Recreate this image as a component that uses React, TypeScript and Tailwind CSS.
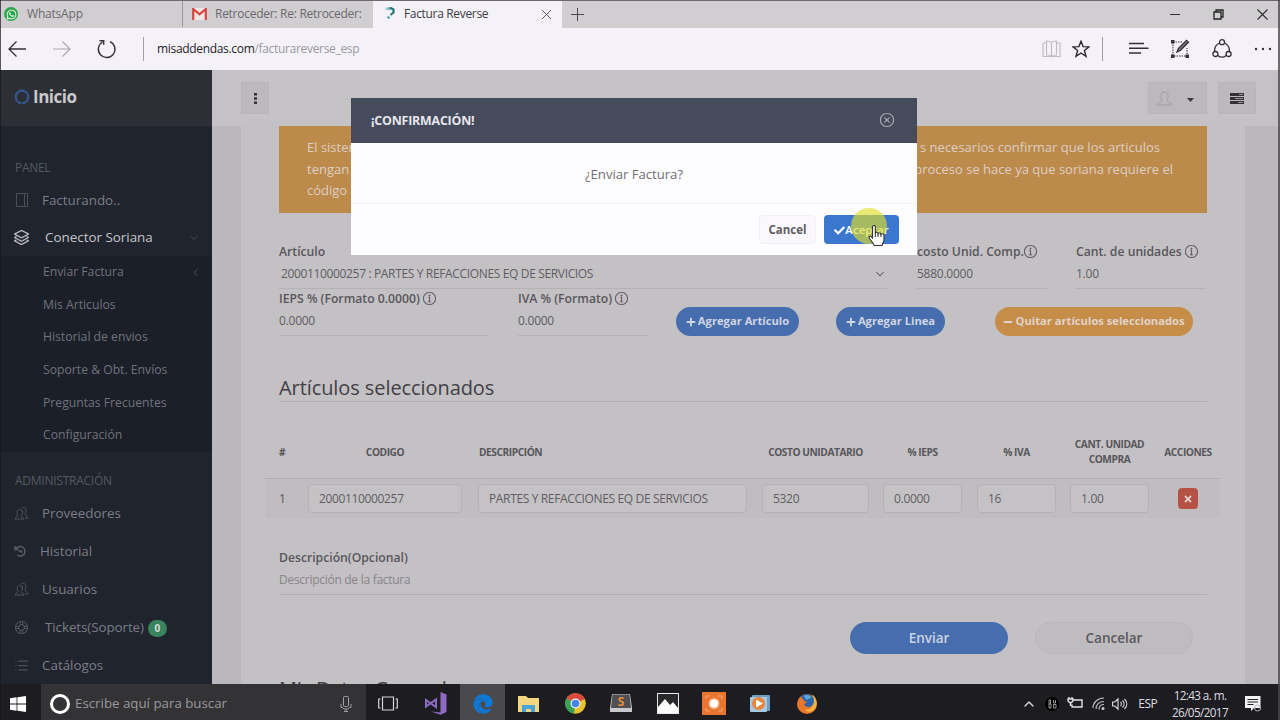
import React from "react";
import { FaCheck, FaEdge, FaMinus, FaPlus, FaTimes, FaWhatsapp } from "react-icons/fa";
import { SlClose, SlInfo, SlLayers, SlSupport } from "react-icons/sl";
import { ChevronDown, ChevronLeft, ChevronUp, List } from "lucide-react";

const BrowserTabs = () => (
  <div className="flex h-7 shrink-0 items-stretch border-t border-[#6f686d] bg-[#d1ced1] pb-px text-[12px] text-[#6b686c]">
    <div className="flex w-[183px] items-center border-r border-[#9d9a9d] pl-1">
      <span className="flex h-[14px] w-[14px] items-center justify-center rounded-full bg-[#2ea64b] text-[11px] text-white">
        <FaWhatsapp />
      </span>
      <span className="ml-[9px] tracking-[-0.2px]">WhatsApp</span>
    </div>
    <div className="flex w-[190px] items-center pl-[9px]">
      <svg width="15" height="12" viewBox="0 0 15 12">
        <rect width="15" height="12" fill="#efe6e6" />
        <path d="M1.2 12V1l6.3 5.4L13.8 1v11" fill="none" stroke="#d8453d" strokeWidth="2.2" />
      </svg>
      <span className="ml-[8px] whitespace-nowrap tracking-[-0.27px]">Retroceder: Re: Retroceder:</span>
    </div>
    <div className="-mb-px flex w-[189px] items-center bg-[#f4f2f8] pb-px pl-[11px] text-[#3d3b40]">
      <svg width="12" height="14" viewBox="0 0 12 14">
        <path d="M3 2l4-.8 2.500 1.300v3L6.500 8" fill="none" stroke="#27767c" strokeWidth="2.200" />
        <path d="M1.500 1.500l4 1" stroke="#8fcccc" strokeWidth="2" />
        <path d="M3.500 9.500l2 2" stroke="#4aa7a8" strokeWidth="2" />
      </svg>
      <span className="ml-[8px] tracking-[-0.33px]">Factura Reverse</span>
      <svg className="ml-auto mr-[10px]" width="11" height="11" viewBox="0 0 11 11" stroke="#5c595e" fill="none">
        <path d="M1 1l9 9M10 1l-9 9" />
      </svg>
    </div>
    <div className="flex flex-1 items-center pl-[9px]">
      <svg width="13" height="13" viewBox="0 0 13 13" stroke="#4a474b" fill="none">
        <path d="M6.500 0v13M0 6.500h13" />
      </svg>
      <div className="ml-auto mr-[12px] flex items-center gap-[33px]">
        <svg width="10" height="10" viewBox="0 0 10 10" stroke="#333">
          <path d="M0 5.500h10" />
        </svg>
        <svg width="11" height="11" viewBox="0 0 11 11" stroke="#222" strokeWidth="1.300" fill="none">
          <path d="M1 3h7v7H1zM3 3V1h7v7H8" />
        </svg>
        <svg width="11" height="11" viewBox="0 0 11 11" stroke="#333" strokeWidth="1.200">
          <path d="M.5.5l10 10M10.500.5l-10 10" />
        </svg>
      </div>
    </div>
  </div>
);

const AddressBar = () => (
  <div className="flex h-[42px] shrink-0 items-center bg-[#f4f2f8] pl-2 text-[12px]">
    <svg width="18" height="16" viewBox="0 0 18 16" fill="none" stroke="#333136" strokeWidth="1.300">
      <path d="M18 8H1M8.500.5L1 8l7.500 7.500" />
    </svg>
    <svg className="ml-[27px]" width="18" height="16" viewBox="0 0 18 16" fill="none" stroke="#a9a6ac" strokeWidth="1.200">
      <path d="M0 8h17M9.500.5L17 8l-7.500 7.500" />
    </svg>
    <svg className="ml-[26px]" width="20" height="20" viewBox="0 0 20 20" fill="none" stroke="#333136" strokeWidth="1.400">
      <path d="M13 2.600A8.300 8.300 0 1 1 5.500 3M2.500 1.800h4.200v4" />
    </svg>
    <div className="ml-[26px] h-6 w-px bg-[#a19ea4]" />
    <span className="ml-[13px] whitespace-nowrap tracking-[-0.32px] text-[#242227]">
      misaddendas.com<span className="text-[#9b989e]">/facturareverse_esp</span>
    </span>
    <div className="ml-auto flex items-center pr-[8px]">
      <svg width="19" height="18" viewBox="0 0 19 18" fill="none" stroke="#bfbcc3" strokeWidth="1.200">
        <path d="M9.500 2.500C8 1 6 1 4.500 1v14c2 0 3.500 0 5 1.500M9.500 2.500C11 1 13 1 14.500 1v14c-2 0-3.500 0-5 1.500V2.500M4.500 3H1v13.500h17V3h-3.500" />
      </svg>
      <svg className="ml-[11px]" width="18" height="18" viewBox="0 0 18 18" fill="none" stroke="#2b292e" strokeWidth="1.400">
        <path d="M9 1.200l2.100 5.400 5.900.2-4.600 3.600 1.600 5.900L9 13l-5 3.300 1.600-5.900L1 6.800l5.900-.2z" />
      </svg>
      <div className="ml-[12px] h-6 w-px bg-[#a19ea4]" />
      <svg className="ml-[26px]" width="20" height="14" viewBox="0 0 20 14" stroke="#333136" strokeWidth="1.400">
        <path d="M0 1.500h15M0 6.200h19.500M0 11h12" />
      </svg>
      <svg className="ml-[21px]" width="20" height="20" viewBox="0 0 20 20" fill="none" stroke="#333136">
        <path d="M3 3h9M3 3v14h14V9" strokeDasharray="1.500 1" />
        <path d="M1 1h3.500v3.500H1zM1 15.500h3.500V19H1zM15.500 15.500H19V19h-3.500z" fill="#333136" stroke="none" />
        <path d="M7 13l1.300-3.500 8.200-8.200 2 2-8.200 8.200z" fill="#77747a" strokeWidth="1.300" />
      </svg>
      <svg className="ml-[22px]" width="20" height="20" viewBox="0 0 20 20" fill="none" stroke="#333136" strokeWidth="1.300">
        <circle cx="10" cy="3.200" r="2.500" />
        <circle cx="3.400" cy="15" r="2.500" />
        <circle cx="16.600" cy="15" r="2.500" />
        <path d="M7.500 4C4.300 5.500 2.300 9 2.700 12.400M12.500 4c3.200 1.500 5.200 5 4.800 8.400M5.800 16.500c2.500 2 5.900 2 8.400 0" />
      </svg>
      <svg className="ml-[22px]" width="18" height="4" viewBox="0 0 18 4" fill="#333136">
        <circle cx="2" cy="2" r="1.200" />
        <circle cx="9" cy="2" r="1.200" />
        <circle cx="16" cy="2" r="1.200" />
      </svg>
    </div>
  </div>
);

const UsersIcon = () => (
  <svg width="15" height="15" viewBox="0 0 15 15" fill="none" stroke="#50545d">
    <path d="M1 13h9c0-2-3-2-3-3.500C8.500 8 9 6 8.500 4.500M1 13c0-2 3-2 3-3.500C2.500 8 2.500 3.500 5.500 3.500 7 3.500 8 4.500 8 6M7 2.500C8 .8 11.500.8 12 4c.2 2-1 3-1 4.500 0 1 3 1.500 3 3.500h-3" />
  </svg>
);

const subItems = [
  "Enviar Factura",
  "Mis Articulos",
  "Historial de envios",
  "Soporte & Obt. Envíos",
  "Preguntas Frecuentes",
  "Configuración",
];

const Sidebar = () => (
  <aside className="flex w-[212px] shrink-0 flex-col overflow-hidden bg-[#20242d] text-[13.4px] text-[#7b7e86]">
    <div className="flex h-14 shrink-0 items-center bg-[#2c2f36] pb-[2px] pl-[14px]">
      <svg width="16" height="16" viewBox="0 0 16 16" fill="none" stroke="#34558e" strokeWidth="2.300">
        <circle cx="8" cy="8" r="6.300" strokeDasharray="18.800 1" transform="rotate(-87 8 8)" />
      </svg>
      <span className="ml-[3px] text-[17px] font-bold tracking-[-0.5px] text-[#c9c8cb]">Inicio</span>
    </div>
    <div className="mt-[28px] flex h-7 shrink-0 items-center pl-[15px] text-[12px] tracking-[-0.3px] text-[#555962]">PANEL</div>
    <div className="mt-[3px] flex h-[30px] shrink-0 items-center pl-[16px]">
      <svg width="12" height="14" viewBox="0 0 12 14" fill="none" stroke="#4c5059">
        <path d="M.5.5h11v13H.5zM8.500.5v13" />
      </svg>
      <span className="ml-[14px]">Facturando..</span>
    </div>
    <div className="flex h-[41px] shrink-0 items-center pl-[14px] pt-[4px] text-[#c6c6ca]">
      <SlLayers size={15} strokeWidth={20} stroke="#c6c6ca" />
      <span className="ml-[16px]">Conector Soriana</span>
      <ChevronDown className="ml-auto mr-[12px] text-[#4a4e57]" size={12} />
    </div>
    <div className="flex h-[196px] shrink-0 flex-col bg-[#1b1f28] text-[12.2px] text-[#70737b]">
      {subItems.map((label, i) => (
        <div key={label} className="flex h-[32.6px] items-center pl-[43px]">
          <span>{label}</span>
          {i === 0 && <ChevronLeft className="ml-auto mr-[11px] text-[#5a5e67]" size={11} />}
        </div>
      ))}
    </div>
    <div className="mt-[13px] flex h-7 shrink-0 items-center pt-1 pl-[15px] text-[12px] tracking-[-0.25px] text-[#555962]">ADMINISTRACIÓN</div>
    <div className="mt-[1px] flex h-[38px] shrink-0 items-center pl-[14px]">
      <UsersIcon />
      <span className="ml-[13px]">Proveedores</span>
    </div>
    <div className="flex h-[38px] shrink-0 items-center pl-[14px]">
      <svg width="12" height="12" viewBox="0 0 12 12" fill="none" stroke="#5a5e67" strokeWidth="1.500">
        <path d="M1 1v3.500h3.500M1.500 4.300C3 1.500 6.500.8 9 2.500s2.500 5.500.5 7.300c-2 1.700-4.500 1.500-6.300.2M4.500 6h3v2" />
      </svg>
      <span className="ml-[14px]">Historial</span>
    </div>
    <div className="flex h-[38px] shrink-0 items-center pl-[14px]">
      <UsersIcon />
      <span className="ml-[13px]">Usuarios</span>
    </div>
    <div className="flex h-[38px] shrink-0 items-center pl-[15px]">
      <SlSupport size={13} color="#5a5e67" />
      <span className="ml-[17px] tracking-[-0.08px]">Tickets(Soporte)</span>
      <span className="ml-[4px] mt-[2px] flex h-[17px] w-[19px] items-center justify-center rounded-full bg-[#37845f] text-[10px] font-bold text-[#d5dcd8]">
        0
      </span>
    </div>
    <div className="flex h-[38px] shrink-0 items-center pl-[14px]">
      <List size={15} color="#4c5059" />
      <span className="ml-[13px]">Catálogos</span>
    </div>
  </aside>
);

type FieldProps = {
  label: string;
  value: string;
  className: string;
  info?: boolean;
  tight?: boolean;
  children?: React.ReactNode;
};

const Field = ({ label, value, className, info, tight, children }: FieldProps) => (
  <div className={`flex shrink-0 flex-col ${className}`}>
    <div className="flex h-[22px] items-center whitespace-nowrap text-[12.2px] font-semibold text-[#58565b]">
      {label}
      {info && (
        <SlInfo className={`mb-[2px] ${tight ? "ml-0" : "ml-[3px]"}`} size={13} stroke="#58565b" strokeWidth={15} />
      )}
    </div>
    <div className="flex h-[26px] items-start border-b border-[#b5b2b6] text-[12px] leading-[22px] tracking-[-0.25px] text-[#605d62]">
      {value}
      {children}
    </div>
  </div>
);

const cellInput =
  "flex h-[29px] items-center rounded-sm border border-[#b5b2b6] bg-[#c5c2c6] pl-[10px] text-[12px] text-[#605d62]";

const ArticlesTable = () => (
  <div className="-mx-[14px] mt-[24px] w-[955px] text-[#58565b]">
    <div className="grid h-[53px] grid-cols-[43px_170px_284px_121px_94px_93px_93px_57px] items-center border-b border-[#b2afb3] text-center text-[10.2px] font-bold leading-[15px] tracking-[-0.45px]">
      <span className="pl-[14px] text-left">#</span>
      <span className="pr-[16px]">CODIGO</span>
      <span className="pl-px text-left">DESCRIPCIÓN</span>
      <span className="pr-[14px]">COSTO UNIDATARIO</span>
      <span className="pr-[15px]">% IEPS</span>
      <span className="pr-[14px]">% IVA</span>
      <span className="pr-[14px]">
        CANT. UNIDAD
        <br />
        COMPRA
      </span>
      <span className="-ml-[7px]">ACCIONES</span>
    </div>
    <div className="grid h-[39px] grid-cols-[43px_170px_284px_121px_94px_93px_93px_57px] items-center bg-[#c0bdc1]">
      <span className="pl-[14px] text-[12px]">1</span>
      <div className={`${cellInput} w-[154px] tracking-[-0.35px]`}>2000110000257</div>
      <div className={`${cellInput} w-[269px] tracking-[-0.36px]`}>PARTES Y REFACCIONES EQ DE SERVICIOS</div>
      <div className={`${cellInput} w-[107px] tracking-[-0.3px]`}>5320</div>
      <div className={`${cellInput} w-[79px] tracking-[-0.3px]`}>0.0000</div>
      <div className={`${cellInput} w-[79px] tracking-[-0.3px]`}>16</div>
      <div className={`${cellInput} w-[79px] tracking-[-0.3px]`}>1.00</div>
      <button className="ml-[15px] flex h-[21px] w-5 items-center justify-center rounded-sm bg-[#b65145] text-[10px] text-[#ddd4d6]">
        <FaTimes />
      </button>
    </div>
  </div>
);

const pill = "flex h-[29px] items-center justify-center gap-[2px] whitespace-nowrap rounded-full text-[11.2px] font-bold";

const Content = () => (
  <main className="flex min-w-0 flex-1 flex-col overflow-hidden bg-[#bab8bb]">
    <div className="flex h-14 shrink-0 items-center bg-[#c4c2c5] pl-[29px] pr-[24px]">
      <button className="flex h-8 w-7 items-center justify-center border border-[#b9b6ba] bg-[#bcb9bd]">
        <svg width="3" height="11" viewBox="0 0 3 11" fill="#333">
          <path d="M0 0h3v2.500H0zM0 4.200h3v2.500H0zM0 8.500h3V11H0z" />
        </svg>
      </button>
      <button className="ml-auto flex h-8 w-[59px] items-center border border-[#b9b6ba] bg-[#bcb9bd] pl-[7px]">
        <svg width="17" height="15" viewBox="0 0 17 15" fill="none" stroke="#aaa7ab" strokeWidth="1.300">
          <path d="M1 14h15c0-3-5-2.500-5-5C13 6 12.500 1 8.500 1S4 6 6 9c0 2.500-5 2-5 5z" />
        </svg>
        <svg className="ml-[14px] mt-1" width="7" height="4" viewBox="0 0 7 4" fill="#3a383c">
          <path d="M0 0h7L3.500 4z" />
        </svg>
      </button>
      <button className="ml-[11px] flex h-8 w-[38px] items-center justify-center border border-[#b9b6ba] bg-[#bcb9bd]">
        <svg width="14" height="11" viewBox="0 0 14 11">
          <path d="M0 0h14v3H0zM0 4h14v3H0zM0 8h14v3H0z" fill="#333136" />
          <path d="M9 1h4v1H9zM5 5h8v1H5zM8 9h5v1H8z" fill="#96939a" />
        </svg>
      </button>
    </div>
    <div className="ml-[29px] flex w-[1004px] flex-1 flex-col bg-[#c4c1c5] px-[38px]">
      <div className="h-[87px] w-[928px] shrink-0 bg-[#bc8a4a] px-7 pt-[11px] text-[13px] leading-[21.5px] text-[#dccfc5]">
        <div className="flex justify-between">
          <span>El sistema</span>
          <span className="pr-[19px]">s necesarios confirmar que los articulos</span>
        </div>
        <div className="flex justify-between">
          <span>tengan</span>
          <span className="pr-[6px]">proceso se hace ya que soriana requiere el</span>
        </div>
        <div>código</div>
      </div>
      <div className="mt-[28px] flex">
        <Field label="Artículo" value="" className="w-[608px]">
          <span className="pl-[2px] tracking-[-0.35px]">2000110000257 : PARTES Y REFACCIONES EQ DE SERVICIOS</span>
          <ChevronDown className="ml-auto mt-[4px]" size={14} strokeWidth={1.8} />
        </Field>
        <Field label="costo Unid. Comp." value="5880.0000" className="ml-[30px] w-[130px]" info tight />
        <Field label="Cant. de unidades" value="1.00" className="ml-[29px] w-[130px]" info />
      </div>
      <div className="-mt-px flex">
        <Field label="IEPS % (Formato 0.0000)" value="0.0000" className="w-[210px]" info />
        <Field label="IVA % (Formato)" value="0.0000" className="ml-[29px] w-[131px]" info />
        <div className="mt-[19px] ml-[27px] flex">
          <button className={`${pill} w-[123px] bg-[#466eae] text-[#d0d5e2]`}>
            <FaPlus size={10} /> Agregar Artículo
          </button>
          <button className={`${pill} ml-[37px] w-[109px] bg-[#466eae] text-[#d0d5e2]`}>
            <FaPlus size={10} /> Agregar Linea
          </button>
          <button className={`${pill} ml-[50px] w-[198px] bg-[#c58d48] text-[#e0d3ca]`}>
            <FaMinus size={10} /> Quitar artículos seleccionados
          </button>
        </div>
      </div>
      <h2 className="mt-[37px] flex h-[29px] w-[928px] items-center border-b border-[#b1aeb2] pt-px text-[20px] tracking-[-0.08px] text-[#424045]">
        Artículos seleccionados
      </h2>
      <ArticlesTable />
      <div className="mt-[29px] flex">
        <div className="flex w-[928px] flex-col">
          <div className="flex h-[22px] items-center text-[12.2px] font-semibold text-[#58565b]">Descripción(Opcional)</div>
          <div className="h-[26px] border-b border-[#b2afb3] text-[12px] leading-[22px] tracking-[-0.28px] text-[#87848a]">
            Descripción de la factura
          </div>
        </div>
      </div>
      <div className="mt-[27px] flex shrink-0 justify-end pr-[14px] text-[13.5px] font-semibold">
        <button className="h-8 w-[158px] rounded-full bg-[#466eae] text-[#cdd4e2]">Enviar</button>
        <button className="ml-[27px] h-8 w-[158px] rounded-full border border-[#bab7bb] bg-[#bfbcc0] text-[#5a585d]">Cancelar</button>
      </div>
      <h2 className="mt-[21px] shrink-0 text-[20px] leading-[28px] tracking-[-0.2px] text-[#424045]">Mis Datos Generales</h2>
    </div>
  </main>
);

const ConfirmModal = () => (
  <div className="absolute left-[351px] top-[98px] z-10 flex h-[157px] w-[566px] flex-col bg-[#fdfcfe]">
    <div className="flex h-[45px] items-center bg-[#454b5b] pl-[20px] pr-[23px]">
      <h3 className="pt-px text-[12.4px] font-bold tracking-[-0.2px] text-[#e6e6ee]">¡CONFIRMACIÓN!</h3>
      <SlClose className="mb-[2px] ml-auto text-[#b5b8c3]" size={14} stroke="#b5b8c3" strokeWidth={15} />
    </div>
    <p className="flex h-[61px] items-center justify-center border-b border-[#f5f3f7] pt-[3px] text-[13.1px] text-[#706e73]">
      ¿Enviar Factura?
    </p>
    <div className="flex justify-end pt-[11px] pr-[18px] text-[12px] font-semibold">
      <button className="h-[29px] w-[57px] rounded-sm border border-[#f3eff7] bg-[#faf8fd] pt-px text-[11.5px] font-bold text-[#5f5d63]">
        Cancel
      </button>
      <button className="ml-[8px] flex h-[29px] w-[75px] items-center justify-center rounded-sm bg-[#3b77cf] pt-px text-[11.5px] text-white">
        <FaCheck size={11} />
        Aceptar
      </button>
    </div>
  </div>
);

const Pointer = () => (
  <div className="absolute left-[851px] top-[208px] z-20 h-10 w-9">
    <div className="h-9 w-9 rounded-full bg-[#dede2a]/65" />
    <svg className="absolute left-[17px] top-[17px]" width="18" height="22" viewBox="0 0 16 22" preserveAspectRatio="none">
      <path
        d="M4 1.500C4 .3 6.500.3 6.500 1.500V8c.5-1 2.500-.8 2.500.5.600-.9 2.500-.6 2.500.6.700-.8 2.700-.4 2.700 1V15c0 2-1.200 3-1.700 5.500H5.500C5 18 1.500 14.500 1 12.500.8 11 2.500 10.800 4 13z"
        fill="#fff"
        stroke="#333"
      />
      <path d="M6.500 8v4M9 8.500V12M11.500 9v3" stroke="#333" strokeWidth=".9" />
    </svg>
  </div>
);

const Taskbar = () => (
  <footer className="flex h-9 shrink-0 items-stretch bg-[#1d1d21]">
    <div className="flex w-[41px] items-center pl-[10px] pt-[3px]">
      <svg width="16" height="16" viewBox="0 0 16 16" fill="#fff">
        <path d="M0 2.200l6.600-.9v6.200H0zM7.400 1.200L16 0v7.500H7.400zM0 8.400h6.600v6.300L0 13.800zM7.400 8.400H16V16l-8.600-1.200z" />
      </svg>
    </div>
    <div className="flex w-[325px] items-center bg-[#333235] pl-[9px] pt-[3px] text-[13.300px] text-[#9b999d]">
      <span className="h-5 w-5 rounded-full border-[3px] border-white" />
      <span className="ml-[5px]">Escribe aquí para buscar</span>
      <svg className="ml-auto mr-[14px]" width="12" height="16" viewBox="0 0 12 16" fill="none" stroke="#a09ea2">
        <rect x="3.500" y=".5" width="5" height="10" rx="1" />
        <path d="M1 8v3.500h1.500L4 13h4l1.500-1.500H11V8M6 13v2.500M4 15.500h4" />
      </svg>
    </div>
    <div className="flex flex-1 items-center">
      <svg className="mt-[3px] ml-[12px]" width="20" height="15" viewBox="0 0 20 15" fill="none" stroke="#d5d4d7" strokeWidth="1.200">
        <path d="M4.500 1h11v13h-11zM2.500 3H.7v9h1.800M17.500 3h1.800v9h-1.800" />
      </svg>
      <svg className="mt-[3px] ml-[26px]" width="23" height="23" viewBox="0 0 23 23">
        <path d="M16.500 0L22.500 2.500v17.500l-6 2.800L7 19.500l9.500 1V0z" fill="#8d6bc4" />
        <path d="M2 8l10 7V7.500L2 14.500z" fill="none" stroke="#8d6bc4" strokeWidth="2" />
      </svg>
      <div className="ml-[13px] flex h-full w-[45px] items-center justify-center bg-[#4a494c] pt-[3px]">
        <FaEdge size={20} color="#0f77d4" />
      </div>
      <div className="flex items-center pt-[3px]">
        <svg className="ml-[13px]" width="21" height="18" viewBox="0 0 21 18">
          <path d="M0 1h8l2 2h11v14H0z" fill="#f4d67e" />
          <path d="M4 17v-7h13v7h-4v-3H8v3z" fill="#4aa3d8" />
        </svg>
        <svg className="ml-[26px]" width="21" height="21" viewBox="0 0 21 21">
          <circle cx="10.500" cy="10.500" r="10.300" fill="#e9c22f" />
          <path d="M10.500 10.500L1.600 5.300A10.300 10.300 0 0 1 19.800 6z" fill="#dc4a3e" />
          <path d="M10.500 10.500L1.600 5.300a10.300 10.300 0 0 0 7.400 15.300z" fill="#36a257" />
          <circle cx="10.500" cy="10.500" r="5" fill="#f3f3f3" />
          <circle cx="10.500" cy="10.500" r="3.800" fill="#4384e6" />
        </svg>
        <svg className="ml-[24px]" width="22" height="21" viewBox="0 0 22 21">
          <path d="M2 1h18l2 14v4H0v-4z" fill="#c9c8ca" />
          <path d="M2.500 1.500h17L21 15H1z" fill="#504f52" />
          <text x="11" y="12.500" textAnchor="middle" fontSize="12" fontWeight="700" fill="#e88b3a">
            S
          </text>
        </svg>
        <svg className="ml-[25px]" width="22" height="21" viewBox="0 0 22 21">
          <rect x=".5" y=".5" width="21" height="20" fill="#29282b" stroke="#e8e7e9" />
          <path d="M1 20v-6l7-8 5 6 3-3 5 6v5z" fill="#fff" />
        </svg>
        <svg className="ml-[23px]" width="24" height="23" viewBox="0 0 24 23">
          <rect width="24" height="23" fill="#e8752f" />
          <path d="M4 7V4h4M16 4h4v3M4 16v3h4M16 19h4v-3" fill="none" stroke="#f2a877" />
          <circle cx="12" cy="11.500" r="5.500" fill="#f5b58b" />
          <circle cx="12" cy="11.500" r="4" fill="#fff" />
        </svg>
        <svg className="ml-[24px]" width="20" height="19" viewBox="0 0 20 19">
          <rect x="2" y="1" width="18" height="16" rx="1" fill="#6d9dc2" />
          <rect x="0" y="3" width="17" height="15" rx="1" fill="#a6c9e0" />
          <circle cx="8.500" cy="9.500" r="6.500" fill="#e8833a" />
          <path d="M6 5.500l7 4-7 4z" fill="#fff" />
        </svg>
        <svg className="ml-[26px]" width="22" height="22" viewBox="0 0 21 22">
          <circle cx="10.500" cy="11" r="10" fill="#e8772c" />
          <path d="M16 1.500c5 4 5.500 11 2 15-3 3-8 3-10 0 5 1 8-2 8-6z" fill="#f3b53c" />
          <path d="M4.500 3.500C8 0 14 0 17 5c1.500 5-1 9-5 9-2 0-4-1-4.500-3l3-1.500-3-2z" fill="#2c63ab" />
          <path d="M7 3c3-2 7-1 8 1.500L10 7z" fill="#59a6d9" />
        </svg>
      </div>
      <div className="ml-auto flex items-center pt-[3px] text-[#dddce0]">
        <ChevronUp size={16} />
        <svg className="ml-[8px]" width="14" height="14" viewBox="0 0 14 14">
          <circle cx="7" cy="7" r="7" fill="#000" />
          <path d="M4 3v8h2V7H4M4 3h1.500v4M8.500 3v3h2V3M8.500 7.500h2.500V11H8.500z" fill="none" stroke="#b9b8bb" strokeWidth=".8" />
        </svg>
        <svg className="ml-[8px]" width="16" height="13" viewBox="0 0 16 13" fill="none" stroke="#e2e1e4" strokeWidth="1.400">
          <path d="M6.500 3H15v7H5V7.500M2 0v2M5 0v2M1 2h5v2L4.500 5.500h-2L1 4zM3.500 5.500V9" />
        </svg>
        <svg className="ml-[9px]" width="13" height="13" viewBox="0 0 13 13" fill="none" stroke="#bbb9be" strokeWidth="1.200">
          <path d="M1 11C1 5.500 5.500 1 12 1M4 12c0-4.500 3-7.500 8-7.500M7 12.500c0-3 2-5 5-5" />
          <circle cx="11" cy="11.500" r="1" fill="#fff" />
        </svg>
        <svg className="ml-[7px]" width="16" height="14" viewBox="0 0 16 14" fill="none" stroke="#d3d2d6" strokeWidth="1.200">
          <path d="M.6 5h2.200L6 2v10L2.800 9H.6zM8.500 5c1 1 1 3 0 4M10.500 3.500c2 2 2 5 0 7M12.500 2c3 3 3 7 0 10" />
        </svg>
        <span className="ml-[10px] text-[12px] tracking-[-0.600px]">ESP</span>
        <div className="ml-[13px] w-[60px] text-center text-[11.700px] leading-[16.500px] tracking-[-0.600px]">
          <div>12:43 a. m.</div>
          <div>26/05/2017</div>
        </div>
        <svg className="ml-[15px] mr-[18px]" width="17" height="16" viewBox="0 0 17 16">
          <path d="M0 0h15.500v12H9l-3 3v-3H0z" fill="#f1f0f3" />
          <path d="M2.500 3.500H13M2.500 6H13M2.500 8.500h6" stroke="#222" />
          <circle cx="12.500" cy="12" r="3" fill="none" stroke="#b7b6ba" />
        </svg>
      </div>
    </div>
  </footer>
);

const App = () => {
  return (
    <div className="relative flex h-[720px] w-[1280px] flex-col overflow-hidden font-['Open_Sans','Noto_Sans',sans-serif]">
      <BrowserTabs />
      <AddressBar />
      <div className="flex h-[614px] shrink-0 overflow-hidden">
        <Sidebar />
        <Content />
      </div>
      <Taskbar />
      <ConfirmModal />
      <Pointer />
      <div className="absolute left-0 top-0 h-full w-px bg-[#17151d]/70" />
      <div className="absolute right-0 top-0 h-full w-[2px] bg-[#4c494e]/80" />
    </div>
  );
};

export default App;
